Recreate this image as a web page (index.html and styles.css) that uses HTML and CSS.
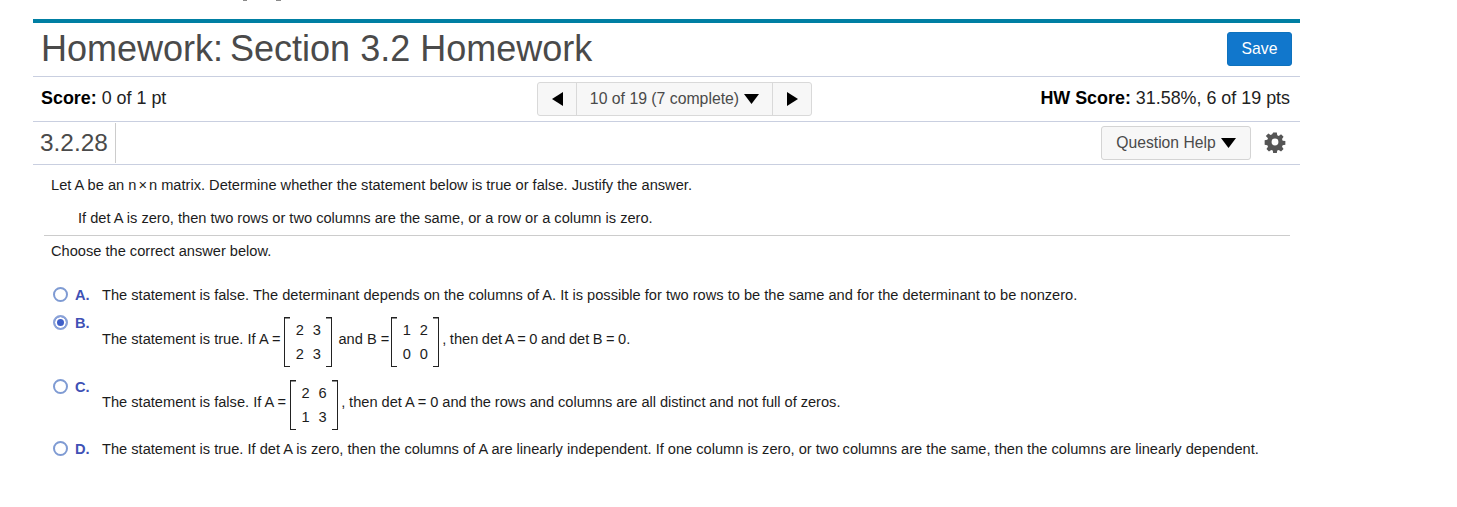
FILE: index.html
```html
<!DOCTYPE html>
<html lang="en">
<head>
<meta charset="utf-8">
<title>Homework: Section 3.2 Homework</title>
<link rel="stylesheet" href="styles.css">
</head>
<body>
<div class="clip"><span class="mark mark-a"></span><span class="mark mark-b"></span></div>
<main class="page">
  <header class="title-row">
    <h1 class="title"><span class="title-lead">Homework: </span>Section 3.2 Homework</h1>
    <button class="save">Save</button>
  </header>
  <section class="score-row">
    <div class="score"><b>Score:</b> 0 of 1 pt</div>
    <nav class="pager">
      <span class="pager-btn"><svg width="11" height="14" viewBox="0 0 11 14"><path d="M11 0V14L0 7Z"/></svg></span>
      <span class="pager-mid">10 of 19 (7 complete) <svg class="caret" width="15" height="10" viewBox="0 0 15 10"><path d="M0 0H15L7.5 10Z"/></svg></span>
      <span class="pager-btn"><svg width="11" height="14" viewBox="0 0 11 14"><path d="M0 0V14L11 7Z"/></svg></span>
    </nav>
    <div class="hw-score"><b>HW Score:</b> 31.58%, 6 of 19 pts</div>
  </section>
  <section class="question-row">
    <div class="qnum">3.2.28</div>
    <div class="tools">
      <button class="help">Question Help <svg class="caret" width="15" height="10" viewBox="0 0 15 10"><path d="M0 0H15L7.5 10Z"/></svg></button>
      <svg class="gear" width="22" height="22" viewBox="0 0 22 22"><path fill-rule="evenodd" d="M9 0.5h4l.5 3 1.7.7 2.5-1.7 2.8 2.8-1.7 2.5.7 1.7 3 .5v4l-3 .5-.7 1.7 1.7 2.5-2.8 2.8-2.5-1.7-1.7.7-.5 3H9l-.5-3-1.7-.7-2.5 1.7-2.8-2.8 1.7-2.5-.7-1.7-3-.5V9l3-.5.7-1.7L.8 4.3l2.8-2.8 2.5 1.7 1.7-.7zM11 7.2a3.8 3.8 0 1 0 0 7.6 3.8 3.8 0 0 0 0-7.6z" transform="translate(1.1 1.1) scale(.9)"/></svg>
    </div>
  </section>
  <section class="content">
    <p class="lead">Let A be an n<span class="times">×</span>n matrix. Determine whether the statement below is true or false. Justify the answer.</p>
    <p class="statement">If det A is zero, then two rows or two columns are the same, or a row or a column is zero.</p>
    <p class="choose">Choose the correct answer below.</p>
    <div class="options">
      <div class="option opt-a">
        <span class="radio"></span><span class="letter">A.</span>
        <div class="text">The statement is false. The determinant depends on the columns of A. It is possible for two rows to be the same and for the determinant to be nonzero.</div>
      </div>
      <div class="option opt-b">
        <span class="radio checked"></span><span class="letter">B.</span>
        <div class="text math"><span class="run">The statement is true. If A =</span><span class="matrix"><span class="m-grid"><span>2</span><span>3</span><span>2</span><span>3</span></span></span><span class="run mid">and B =</span><span class="matrix"><span class="m-grid"><span>1</span><span>2</span><span>0</span><span>0</span></span></span><span class="run after tight">, then det A = 0 and det B = 0.</span></div>
      </div>
      <div class="option opt-c">
        <span class="radio"></span><span class="letter">C.</span>
        <div class="text math"><span class="run">The statement is false. If A =</span><span class="matrix"><span class="m-grid"><span>2</span><span>6</span><span>1</span><span>3</span></span></span><span class="run after snug">, then det A = 0 and the rows and columns are all distinct and not full of zeros.</span></div>
      </div>
      <div class="option opt-d">
        <span class="radio"></span><span class="letter">D.</span>
        <div class="text">The statement is true. If det A is zero, then the columns of A are linearly independent. If one column is zero, or two columns are the same, then the columns are linearly dependent.</div>
      </div>
    </div>
  </section>
</main>
</body>
</html>
```
FILE: styles.css
```css
* { box-sizing: border-box; }
html, body { margin: 0; padding: 0; background: #fff; }
body {
  font-family: "Liberation Sans", Arial, sans-serif;
  font-size: 14.63px;
  color: #1c1c1c;
  height: 507px;
  overflow: hidden;
}
.clip {
  height: 2px;
  display: flex;
  padding-left: 243px;
}
.mark { display: block; height: 1px; background: #8a8a8a; }
.mark-a { width: 4px; margin-right: 29px; }
.mark-b { width: 5px; }
.page {
  margin: 17px 0 0 33px;
  width: 1267px;
  border-top: 4px solid #007fa3;
}
.title-row {
  height: 54px;
  display: flex;
  align-items: center;
  justify-content: space-between;
  padding: 0 8px 2px 8px;
  border-bottom: 1px solid #c9cfe0;
}
.title {
  margin: 0;
  font-size: 36px;
  font-weight: 400;
  color: #4a4a4a;
  line-height: 50px;
}
.title-lead { word-spacing: -3px; }
.save {
  width: 65px;
  height: 34px;
  border: 1px solid #0e72bd;
  border-radius: 3px;
  background: #1177cc;
  color: #fff;
  font: 15.75px "Liberation Sans", Arial, sans-serif;
  padding: 0;
}
.score-row {
  height: 45px;
  display: grid;
  grid-template-columns: 1fr auto 1fr;
  align-items: center;
  padding: 0 10px 1px 8px;
  border-bottom: 1px solid #c9cfe0;
  font-size: 17.9px;
  color: #222;
}
.score-row b { color: #000; }
.hw-score { text-align: right; }
.pager {
  display: flex;
  height: 34px;
  margin-left: 18px;
  border: 1px solid #d9d9d9;
  border-radius: 3px;
  background: #f7f7f7;
  color: #4a4a4a;
  font-size: 15.8px;
}
.pager-btn {
  width: 38px;
  display: flex;
  align-items: center;
  justify-content: center;
}
.pager-mid {
  width: 197px;
  display: flex;
  align-items: center;
  justify-content: center;
  gap: 5px;
  border-left: 1px solid #d9d9d9;
  border-right: 1px solid #d9d9d9;
}
.caret { flex: none; }
.question-row {
  height: 43px;
  display: flex;
  align-items: center;
  justify-content: space-between;
  border-bottom: 1px solid #c9cfe0;
}
.qnum {
  height: 40px;
  width: 83px;
  padding-left: 7px;
  border-right: 1px solid #ccc;
  font-size: 24.4px;
  line-height: 40px;
  color: #4a4a4a;
}
.tools {
  display: flex;
  align-items: center;
  gap: 13px;
  padding-right: 14px;
}
.help {
  width: 150px;
  height: 34px;
  display: flex;
  align-items: center;
  justify-content: center;
  gap: 5px;
  border: 1px solid #d4d4d4;
  border-radius: 3px;
  background: #f7f7f7;
  color: #4a4a4a;
  font: 15.7px "Liberation Sans", Arial, sans-serif;
  padding: 0;
}
.gear { fill: #555; margin-bottom: 2px; }
.content { padding-top: 12px; }
.content p { margin: 0; }
.lead { padding-left: 18px; line-height: 16px; }
.times { padding: 0 2px; }
.statement {
  padding: 17px 0 0 45px;
  line-height: 16px;
}
.choose {
  margin: 9px 10px 0 11px !important;
  padding: 7px 0 0 7px;
  line-height: 16px;
  border-top: 1px solid #ccc;
}
.options { padding: 28px 0 0 20px; }
.option {
  display: grid;
  grid-template-columns: 22px 27px 1fr;
  align-items: start;
}
.radio {
  width: 15px;
  height: 15px;
  border: 2px solid #7f9bd3;
  border-radius: 50%;
  background: #fff;
}
.radio.checked {
  background: #3f5fc8;
  box-shadow: inset 0 0 0 2px #fff;
  border-color: #8aa2d8;
}
.letter {
  font-weight: 700;
  color: #3f51b5;
  line-height: 16px;
}
.text { line-height: 16px; }
.math {
  display: flex;
  align-items: center;
  gap: 4px;
  white-space: nowrap;
}
.run { padding-bottom: 6px; }
.mid { margin: 0 -2px 0 2px; }
.after { margin-left: -1px; }
.tight { word-spacing: -0.55px; }
.snug { word-spacing: -0.15px; }
.matrix {
  display: flex;
  flex: none;
  height: 50px;
  width: 48px;
  border-left: 1.5px solid #222;
  border-right: 1.5px solid #222;
  background:
    linear-gradient(#222, #222) 0 0 / 5px 1.5px no-repeat,
    linear-gradient(#222, #222) 0 100% / 5px 1.5px no-repeat,
    linear-gradient(#222, #222) 100% 0 / 5px 1.5px no-repeat,
    linear-gradient(#222, #222) 100% 100% / 5px 1.5px no-repeat;
}
.m-grid {
  display: grid;
  width: 100%;
  grid-template-columns: 17px 17px;
  justify-content: center;
  align-content: center;
  row-gap: 8px;
  text-align: center;
  line-height: 16px;
}
.opt-b { margin-top: 12px; }
.opt-b .math { margin-top: 2px; }
.opt-c { margin-top: 12px; }
.opt-c .math { margin-top: 1px; }
.opt-d { margin-top: 11px; }
```
